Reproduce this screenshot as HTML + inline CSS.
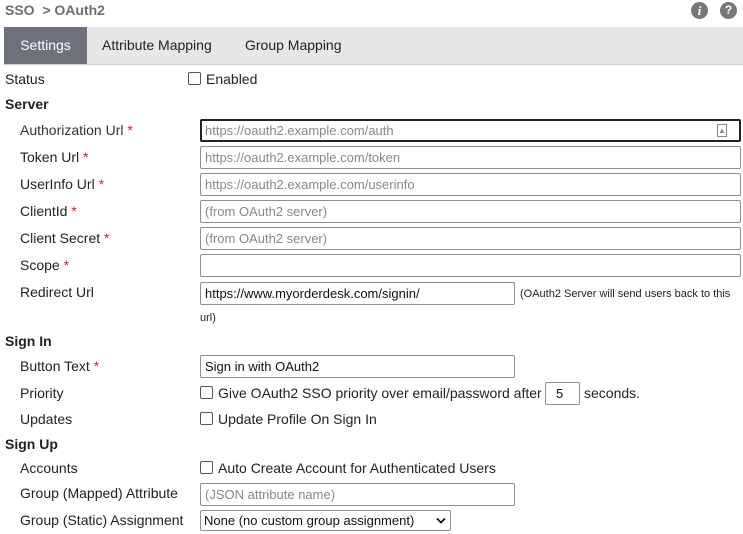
<!DOCTYPE html>
<html><head><style>
body{margin:0;width:743px;height:534px;background:#fff;font-family:"Liberation Sans",Arial,sans-serif;font-size:14px;color:#222;position:relative;overflow:hidden}
.a{position:absolute;white-space:nowrap}
.l{left:20px;transform:translateY(-50%)}
.h{left:5px;font-weight:bold;transform:translateY(-50%)}
.r{color:#d22}
.in{position:absolute;left:200px;width:541px;height:23px;box-sizing:border-box;border:1px solid #8f8f8f;border-radius:2px;font-size:13px;color:#888;padding-left:4px;line-height:21px}
.cb{display:inline-block;width:11px;height:11px;border:1px solid #555;border-radius:2px;vertical-align:-1px;margin-right:5px;background:#fff}
.ic{position:absolute;top:2px;width:17px;height:17px;border-radius:50%;background:#777;color:#fff;font-weight:bold;font-size:12px;text-align:center;line-height:17px}
</style></head><body>
<div class="a" style="left:5px;top:2px;font-weight:bold;font-size:14px;color:#6d6d6d">SSO&nbsp; &gt; OAuth2</div>
<div class="ic" style="left:691px;font-style:italic;font-family:'Liberation Serif',serif;font-size:13px">i</div>
<div class="ic" style="left:720px">?</div>
<div class="a" style="left:4px;top:27px;width:739px;height:37px;background:#e6e7e8;border-bottom:1px solid #ccc"></div>
<div class="a" style="left:4px;top:27px;width:83px;height:37px;background:#6c717b;color:#fff;line-height:37px;text-align:center">Settings</div>
<div class="a" style="left:102px;top:27px;line-height:37px">Attribute Mapping</div>
<div class="a" style="left:245px;top:27px;line-height:37px">Group Mapping</div>
<div class="a" style="left:5px;top:79px;transform:translateY(-50%)">Status</div>
<div class="a" style="left:188px;top:79px;transform:translateY(-50%)"><span class="cb"></span>Enabled</div>
<div class="a h" style="top:104px">Server</div>
<div class="a l" style="top:130px;color:#333">Authorization Url <span class="r">*</span></div>
<div class="in" style="top:119px;border:2px solid #222;line-height:19px;padding-left:3px">https://oauth2.example.com/auth<span style="position:absolute;right:12px;top:3px;width:8px;height:11px;border:1px solid #888;font-size:8px;line-height:11px;text-align:center">▲</span></div>
<div class="a l" style="top:157px">Token Url <span class="r">*</span></div>
<div class="in" style="top:146px">https://oauth2.example.com/token</div>
<div class="a l" style="top:184px">UserInfo Url <span class="r">*</span></div>
<div class="in" style="top:173px">https://oauth2.example.com/userinfo</div>
<div class="a l" style="top:211px">ClientId <span class="r">*</span></div>
<div class="in" style="top:200px">(from OAuth2 server)</div>
<div class="a l" style="top:238px">Client Secret <span class="r">*</span></div>
<div class="in" style="top:227px">(from OAuth2 server)</div>
<div class="a l" style="top:265px">Scope <span class="r">*</span></div>
<div class="in" style="top:254px"></div>
<div class="a l" style="top:292px">Redirect Url</div>
<div class="in" style="top:282px;width:315px;color:#111">https://www.myorderdesk.com/signin/</div>
<div class="a" style="left:520px;top:288px;font-size:11px">(OAuth2 Server will send users back to this</div>
<div class="a" style="left:200px;top:312px;font-size:11px">url)</div>
<div class="a h" style="top:341px">Sign In</div>
<div class="a l" style="top:366px">Button Text <span class="r">*</span></div>
<div class="in" style="top:355px;width:315px;color:#111">Sign in with OAuth2</div>
<div class="a l" style="top:393px">Priority</div>
<div class="a" style="left:200px;top:393px;transform:translateY(-50%)"><span class="cb"></span>Give OAuth2 SSO priority over email/password after</div>
<div class="in" style="top:382px;left:545px;width:35px;color:#111;padding-left:10px">5</div>
<div class="a" style="left:584px;top:393px;transform:translateY(-50%)">seconds.</div>
<div class="a l" style="top:419px">Updates</div>
<div class="a" style="left:200px;top:419px;transform:translateY(-50%)"><span class="cb"></span>Update Profile On Sign In</div>
<div class="a h" style="top:444px">Sign Up</div>
<div class="a l" style="top:468px">Accounts</div>
<div class="a" style="left:200px;top:468px;transform:translateY(-50%)"><span class="cb"></span>Auto Create Account for Authenticated Users</div>
<div class="a l" style="top:493px">Group (Mapped) Attribute</div>
<div class="in" style="top:483px;width:315px">(JSON attribute name)</div>
<div class="a l" style="top:520px">Group (Static) Assignment</div>
<div class="in" style="top:510px;width:251px;height:21px;line-height:19px;color:#111;padding-left:3px">None (no custom group assignment)<svg style="position:absolute;right:4px;top:6px" width="10" height="7" viewBox="0 0 10 7"><path d="M1 1.5 L5 5.5 L9 1.5" fill="none" stroke="#111" stroke-width="1.8"/></svg></div>
</body></html>
